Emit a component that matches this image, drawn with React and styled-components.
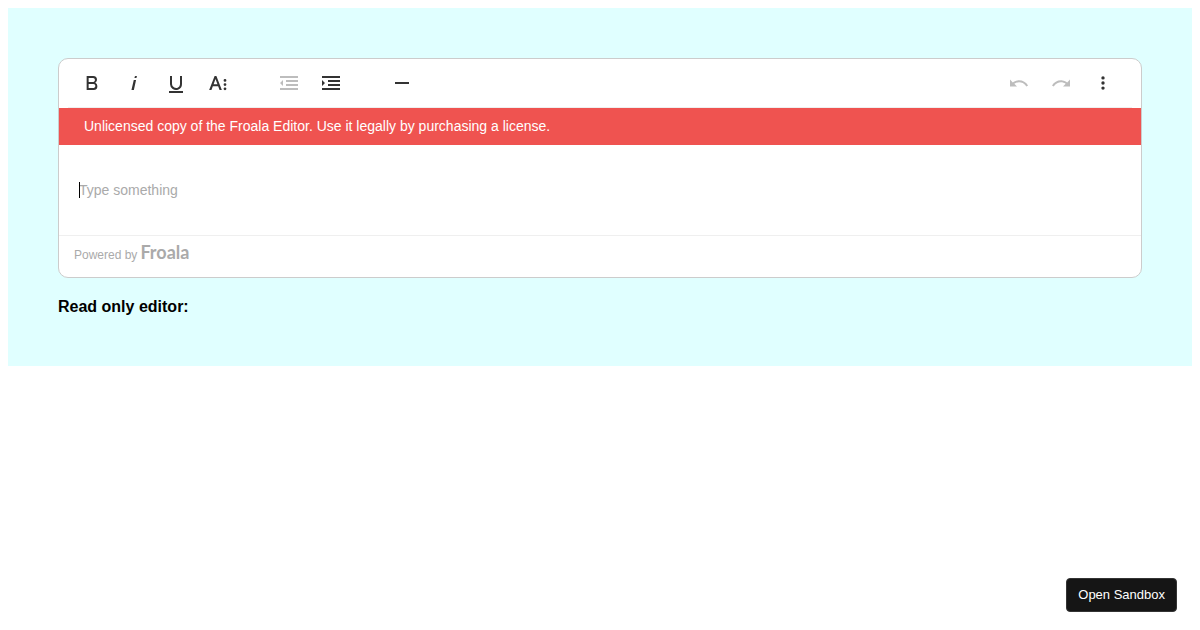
import React from 'react';
import styled, { createGlobalStyle } from 'styled-components';

const icons = {
  bold: 'M15.25,11.8h0A3.68,3.68,0,0,0,17,9a3.93,3.93,0,0,0-3.86-4H6.65V19h7a3.74,3.74,0,0,0,3.7-3.78V15.1A3.64,3.64,0,0,0,15.25,11.8ZM8.65,7h4.2a2.09,2.09,0,0,1,2,1.3,2.09,2.09,0,0,1-1.37,2.61,2.23,2.23,0,0,1-.63.09H8.65Zm4.6,10H8.65V13h4.6a2.09,2.09,0,0,1,2,1.3,2.09,2.09,0,0,1-1.37,2.61A2.23,2.23,0,0,1,13.25,17Z',
  italic: 'M11.76,9h2.3l-2.2,10h-2.4ZM13.44,5h1.5l-.5,2h-2l.3-1.3A1,1,0,0,1,13.44,5Z',
  underline: 'M19,20v2H5V20Zm-3-6.785a4,4,0,0,1-5.74,3.4A3.75,3.75,0,0,1,8,13.085V5.005H6v8.21a6,6,0,0,0,8,5.44,5.851,5.851,0,0,0,4-5.65v-8H16Z',
  moreText: 'M13.55,19h2.3L10.4,5H8.6L3.15,19h2.3l1.4-3.8h5.3ZM7.6,13.2,9.5,8l1.95,5.2ZM19,8a1.4,1.4,0,1,1,0,2.8,1.4,1.4,0,0,1,0-2.8Zm0,4.2a1.4,1.4,0,1,1,0,2.8,1.4,1.4,0,0,1,0-2.8Zm0,4.2a1.4,1.4,0,1,1,0,2.8,1.4,1.4,0,0,1,0-2.8Z',
  outdent: 'M3,12l3,3V9Zm0,7H21V17H3ZM3,7H21V5H3Zm6,4H21V9H9Zm0,4H21V13H9Z',
  indent: 'M3,9v6l3-3Zm0,10H21V17H3ZM3,7H21V5H3Zm6,4H21V9H9Zm0,4H21V13H9Z',
  rule: 'M5,11h14v2H5Z',
  undo: 'M10.4,9.4c-1.7,0.3-3.2,0.9-4.6,2L3,8.5v7h7l-2.7-2.7c3.7-2.6,8.8-1.8,11.5,1.9c0.2,0.3,0.4,0.5,0.5,0.8l1.8-0.9C18.9,10.8,14.7,8.7,10.4,9.4z',
  redo: 'M13.6,9.4c1.7,0.3,3.2,0.9,4.6,2L21,8.5v7h-7l2.7-2.7C13,10.1,7.9,11,5.3,14.7c-0.2,0.3-0.4,0.5-0.5,0.8L3,14.6C5.1,10.8,9.3,8.7,13.6,9.4z',
  more: 'M12,5.2a1.7,1.7,0,1,1,0,3.4,1.7,1.7,0,0,1,0-3.4Zm0,5.1a1.7,1.7,0,1,1,0,3.4,1.7,1.7,0,0,1,0-3.4Zm0,5.1a1.7,1.7,0,1,1,0,3.4,1.7,1.7,0,0,1,0-3.4Z',
};

const Tool = ({ icon, label, disabled }) => (
  <ToolButton type="button" aria-label={label} disabled={disabled}>
    <svg viewBox="0 0 24 24" aria-hidden="true">
      <path d={icons[icon]} />
    </svg>
  </ToolButton>
);

const App = () => (
  <>
    <GlobalStyle />
    <Main>
      <Editor>
        <Toolbar>
          <ToolGroup>
            <Tool icon="bold" label="Bold" />
            <Tool icon="italic" label="Italic" />
            <Tool icon="underline" label="Underline" />
            <Tool icon="moreText" label="More Text" />
          </ToolGroup>
          <ToolGroup>
            <Tool icon="outdent" label="Decrease Indent" disabled />
            <Tool icon="indent" label="Increase Indent" />
          </ToolGroup>
          <ToolGroup>
            <Tool icon="rule" label="Insert Horizontal Line" />
          </ToolGroup>
          <ToolGroup $end>
            <Tool icon="undo" label="Undo" disabled />
            <Tool icon="redo" label="Redo" disabled />
            <Tool icon="more" label="More Misc" />
          </ToolGroup>
        </Toolbar>
        <Divider />
        <LicenseLink href="#license">
          Unlicensed copy of the Froala Editor. Use it legally by purchasing a license.
        </LicenseLink>
        <Content>
          <TextInput aria-label="Editor content" placeholder="Type something" rows={1} />
          <Caret />
        </Content>
        <Footer href="#froala">
          Powered by <Brand>Froala</Brand>
        </Footer>
      </Editor>
      <Heading>Read only editor:</Heading>
    </Main>
    <SandboxButton type="button">Open Sandbox</SandboxButton>
  </>
);

const GlobalStyle = createGlobalStyle`
  * {
    box-sizing: border-box;
  }

  body {
    margin: 8px;
    background-color: #fff;
    font-family: Helvetica, "Liberation Sans", Arial, sans-serif;
  }
`;

const Main = styled.main`
  padding: 50px;
  background-color: #e0ffff;
`;

const Editor = styled.div`
  overflow: hidden;
  background-color: #fff;
  border: 1px solid #ccc;
  border-radius: 10px;
`;

const Toolbar = styled.div`
  display: flex;
  gap: 29px;
  padding: 4px 17px 4px 12px;
`;

const Divider = styled.div`
  height: 1px;
  margin: 0 9px;
  background-color: #efefef;
`;

const ToolGroup = styled.div`
  display: flex;
  margin-left: ${(props) => (props.$end ? 'auto' : '0')};
`;

const ToolButton = styled.button`
  display: flex;
  align-items: center;
  justify-content: center;
  width: 38px;
  height: 40px;
  margin: 0 2px;
  padding: 0;
  color: #333;
  background: transparent;
  border: 0;
  border-radius: 4px;
  cursor: pointer;

  &:disabled {
    color: #bdbdbd;
    cursor: default;
  }

  svg {
    width: 24px;
    height: 24px;
    fill: currentColor;
  }
`;

const LicenseLink = styled.a`
  display: block;
  padding: 10px 25px;
  color: #fff;
  background-color: #ef5350;
  font-size: 14px;
  line-height: 17px;
  text-decoration: none;
`;

const Content = styled.div`
  position: relative;
`;

const TextInput = styled.textarea`
  display: block;
  width: 100%;
  height: 90px;
  padding: 36px 20px;
  color: #000;
  caret-color: transparent;
  background: transparent;
  border: 0;
  outline: 0;
  font: inherit;
  font-size: 14px;
  line-height: 18px;
  resize: none;

  &::placeholder {
    color: #aaa;
    opacity: 1;
  }
`;

const Caret = styled.span`
  position: absolute;
  top: 37px;
  left: 20px;
  width: 1px;
  height: 16px;
  background-color: #000;
  pointer-events: none;
`;

const Footer = styled.a`
  display: flex;
  align-items: baseline;
  gap: 3px;
  height: 42px;
  padding: 5px 15px;
  color: #aaa;
  border-top: 1px solid #efefef;
  font-size: 12px;
  text-decoration: none;
`;

const Brand = styled.span`
  font-family: Lato, sans-serif;
  font-size: 18px;
  font-weight: 700;
`;

const Heading = styled.h4`
  margin: 20px 0 0;
  font-size: 16px;
  line-height: 18px;
`;

const SandboxButton = styled.button`
  position: fixed;
  right: 23px;
  bottom: 18px;
  padding: 8px 11px;
  color: #fff;
  background-color: #151515;
  border: 1px solid #343434;
  border-radius: 4px;
  font-family: "Liberation Sans", Arial, sans-serif;
  font-size: 13px;
  line-height: 16px;
`;

export default App;
